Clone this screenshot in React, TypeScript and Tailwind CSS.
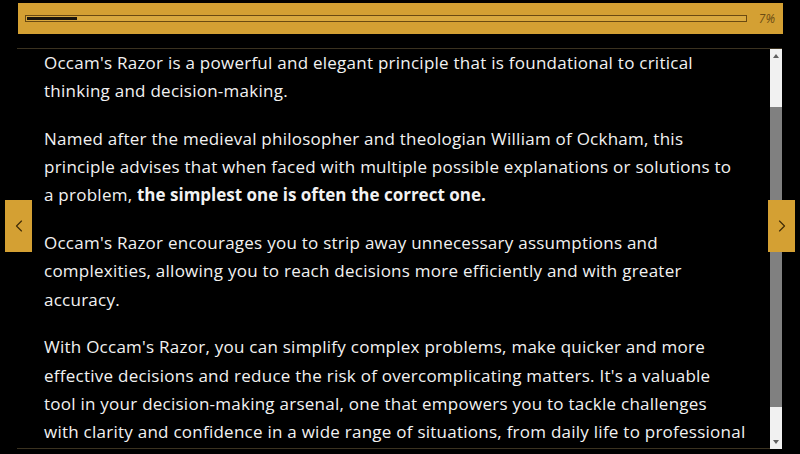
import { ChevronLeft, ChevronRight } from 'lucide-react'

// each paragraph is a list of lines, broken as in the reader
const paragraphs: React.ReactNode[][] = [
  [
    "Occam's Razor is a powerful and elegant principle that is foundational to critical",
    'thinking and decision-making.',
  ],
  [
    'Named after the medieval philosopher and theologian William of Ockham, this',
    'principle advises that when faced with multiple possible explanations or solutions to',
    <>
      a problem, <b className="font-bold tracking-normal">the simplest one is often the correct one.</b>
    </>,
  ],
  [
    "Occam's Razor encourages you to strip away unnecessary assumptions and",
    'complexities, allowing you to reach decisions more efficiently and with greater',
    'accuracy.',
  ],
  [
    "With Occam's Razor, you can simplify complex problems, make quicker and more",
    "effective decisions and reduce the risk of overcomplicating matters. It's a valuable",
    'tool in your decision-making arsenal, one that empowers you to tackle challenges',
    'with clarity and confidence in a wide range of situations, from daily life to professional',
  ],
]

export default function App() {
  const progress = 7

  return (
    <div className="relative h-[454px] w-[800px] overflow-hidden bg-black font-['Open_Sans',sans-serif]">
      {/* progress header */}
      <div className="ml-[18px] mt-[3px] flex h-[31px] w-[765px] items-center bg-[#d4a033] pl-[7px] pr-[8px]">
        <div className="h-[7px] w-[722px] border border-[#6a4a12] bg-[#d9a93f] p-px">
          <div className="h-full bg-[#1c160c]" style={{ width: `${progress}%` }} />
        </div>
        <span className="ml-auto text-[12px] italic text-[#6b4c14]">{progress}%</span>
      </div>

      {/* reader */}
      <div className="ml-[17px] mt-[14px] flex h-[401px] w-[765px] border-t border-[#3b3220]">
        <div className="flex-1 overflow-hidden border-b border-[#3b3220] pl-[27px] pr-[10px]">
          {paragraphs.map((lines, i) => (
            <p key={i} className="mb-[19.6px] text-[17px] leading-[28.2px] tracking-[0.25px] text-[#f2f2f2]">
              {lines.map((l, j) => (
                <span key={j} className="block whitespace-nowrap">
                  {l}
                </span>
              ))}
            </p>
          ))}
        </div>
        <div className="flex w-[12px] flex-col bg-[#f1f1f1]">
          <div className="flex h-[14px] items-center justify-center">
            <div className="h-0 w-0 border-x-[3px] border-b-[4px] border-x-transparent border-b-[#606060]" />
          </div>
          <div className="mt-[44px] h-[300px] bg-[#808080]" />
          <div className="mt-auto flex h-[14px] items-center justify-center">
            <div className="h-0 w-0 border-x-[3px] border-t-[4px] border-x-transparent border-t-[#606060]" />
          </div>
        </div>
      </div>

      {/* page nav */}
      <button className="absolute left-[5px] top-[200px] flex h-[52px] w-[27px] items-center justify-center bg-[#d4a033] text-[#3f2b08]">
        <ChevronLeft size={20} strokeWidth={1.4} />
      </button>
      <button className="absolute left-[768px] top-[200px] flex h-[52px] w-[27px] items-center justify-center bg-[#d4a033] text-[#3f2b08]">
        <ChevronRight size={20} strokeWidth={1.4} />
      </button>
    </div>
  )
}
